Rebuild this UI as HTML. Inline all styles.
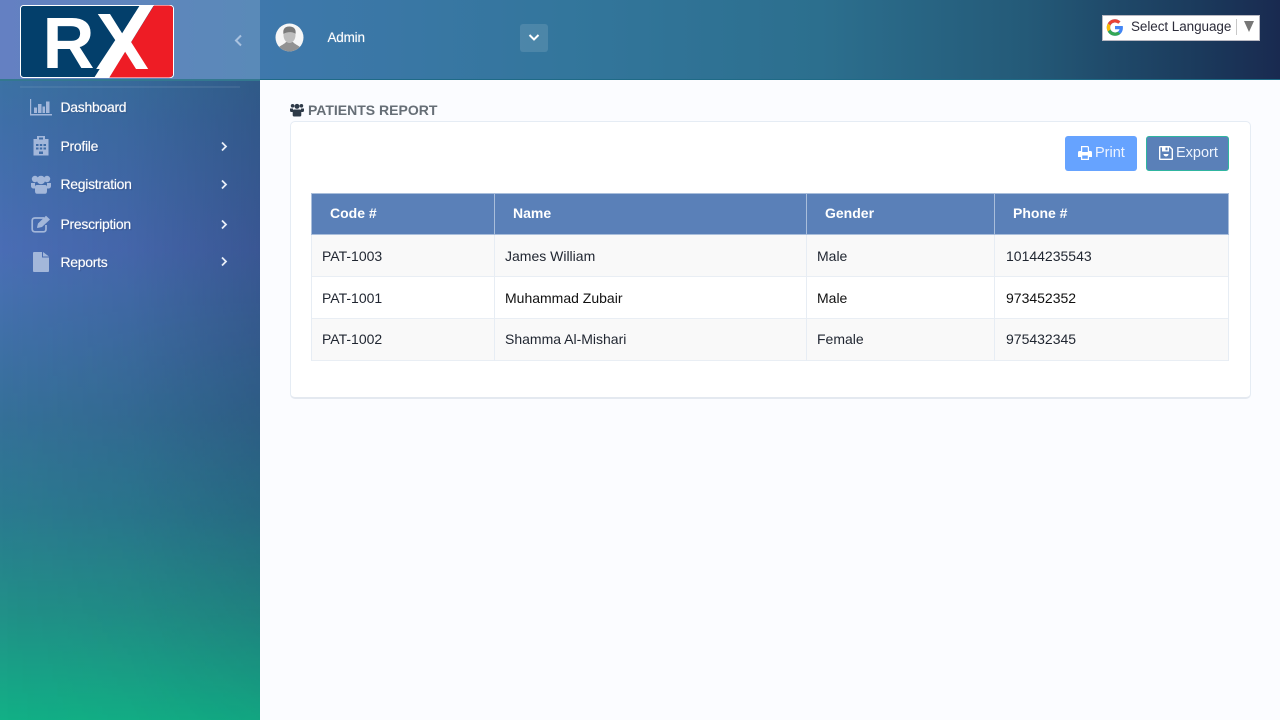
<!DOCTYPE html>
<html><head><meta charset="utf-8"><title>Patients Report</title>
<style>
*{box-sizing:border-box}
html,body{margin:0;padding:0;width:1280px;height:720px;overflow:hidden;background:#fbfcff;font-family:"Liberation Sans",sans-serif;font-size:14px;color:#212529}
.a{position:absolute}
#side{left:0;top:0;width:260px;height:720px;background:linear-gradient(180deg,#3c72a4 80px,#3f6fa8 120px,#4a6db5 250px,#4670b0 290px,#357098 420px,#2b7a90 513px,#219088 613px,#12b086 720px)}
#sideoverlay{left:0;top:0;width:260px;height:720px;background:linear-gradient(90deg,rgba(20,35,70,0) 0,rgba(20,35,70,.1) 50%,rgba(20,35,70,.3) 100%);-webkit-mask-image:linear-gradient(180deg,#000 0,#000 300px,rgba(0,0,0,.25) 720px);mask-image:linear-gradient(180deg,#000 0,#000 300px,rgba(0,0,0,.25) 720px)}
#brand{left:0;top:0;width:260px;height:80px;background:linear-gradient(90deg,#6480c2,#5a8ab8)}
#bar{left:260px;top:0;width:1020px;height:80px;background:linear-gradient(90deg,#3f78ac 0,#33769c 30%,#2c6f8e 55%,#245a78 75%,#1b3a5c 92%,#192a50 100%);border-bottom:1px solid #1f6a86}
#line{left:20px;top:86px;width:220px;height:2px;background:rgba(255,255,255,.07)}
.m{left:60.500px;color:#fff;font-size:14px;letter-spacing:-.3px;line-height:18px;text-shadow:0 0 1px rgba(255,255,255,.6),1px 1px 1px rgba(20,40,90,.35);white-space:nowrap}
.ic{fill:#a3b7da}
#card{left:290px;top:121px;width:961px;height:278px;background:#fff;border:1px solid #e5ecf4;border-bottom:2px solid #e4e9f0;border-radius:5px}
#title{left:308px;top:102px;font-weight:bold;font-size:14px;color:#666e76;line-height:17px;white-space:nowrap}
.btn{top:136px;height:35px;border-radius:3px;color:#fff;font-size:14.500px;line-height:35px;white-space:nowrap}
.h{top:193px;height:42px;background:#5a80b8;border:1px solid #a9bedb;border-width:1px 0 1px 0}
.cell{color:#1f2530;font-size:14px;line-height:18px;white-space:nowrap}
.hd{color:#fff;font-weight:bold;font-size:14px;line-height:18px;top:204px;white-space:nowrap}
.r{left:311px;width:918px}
.v{top:193px;width:1px;height:168px;background:#e7edf4}
.vh{top:193px;width:1px;height:42px;background:#a9bedb}
</style></head><body>
<div class="a" id="side"></div><div class="a" id="sideoverlay"></div>
<div class="a" id="brand"></div>
<div class="a" id="bar"></div>
<div class="a" style="left:0;top:79px;width:260px;height:2px;background:#33788f"></div>
<div class="a" id="line"></div>

<svg class="a" style="left:20px;top:5px" width="154" height="73" viewBox="0 0 154 73">
<rect x=".5" y=".5" width="153" height="72" rx="3" fill="#033f6b" stroke="#fff" stroke-width="1"/>
<path d="M134 .5H149a4 4 0 0 1 4 4V68.500a4 4 0 0 1-4 4H89z" fill="#ee1c25"/>
<text x="22.500" y="63" font-family="Liberation Sans" font-weight="bold" font-size="72" fill="#fff">R</text>
<text x="75.500" y="64" font-family="Liberation Sans" font-weight="bold" font-size="80" fill="#fff">X</text>
<path d="M120 0H134L89 73H74z" fill="#fff"/>
</svg>
<svg class="a" style="left:233px;top:34px" width="11" height="13" viewBox="0 0 11 13"><path d="M8 1.500L3 6.500L8 11.500" fill="none" stroke="#a9c2df" stroke-width="2"/></svg>

<svg class="a" style="left:275px;top:23px" width="29" height="29" viewBox="0 0 29 29">
<defs><clipPath id="av"><circle cx="14.500" cy="14.500" r="14"/></clipPath></defs>
<circle cx="14.500" cy="14.500" r="14" fill="#f6f6f6"/>
<g clip-path="url(#av)"><path d="M1 29C2 23 9 22 11 19H18C20 22 27 23 28 29z" fill="#929292"/><ellipse cx="14.500" cy="12" rx="6" ry="8" fill="#bdbdbd"/><path d="M8.500 11C7.500 5 11 3.500 14.500 3.500C18.500 3.500 21.500 6 20.500 11C18.500 8.500 11.500 8.500 8.500 11z" fill="#7a7a7a"/></g>
</svg>
<div class="a" style="left:327.500px;top:29px;color:#fff;font-size:13.500px;line-height:18px;letter-spacing:-.2px;text-shadow:0 0 1px rgba(255,255,255,.5)">Admin</div>
<div class="a" style="left:520px;top:24px;width:28px;height:28px;border-radius:3px;background:rgba(255,255,255,.12)"></div>
<svg class="a" style="left:528px;top:33px" width="12" height="9" viewBox="0 0 12 9"><path d="M1.500 2L6 6.500L10.500 2" fill="none" stroke="#fff" stroke-width="2"/></svg>

<div class="a" style="left:1102px;top:15px;width:158px;height:26px;background:#fff;border:1px solid #b9b9c2"></div>
<svg class="a" style="left:1106px;top:18px" width="18" height="19" viewBox="0 0 48 48">
<path d="M24 20v8.500h12c-.600 3-3.900 8.700-12 8.700-7.200 0-13-6-13-13.200s5.800-13.200 13-13.200c4.100 0 6.800 1.700 8.400 3.200l6.200-6C34.600 4.300 29.800 2 24 2 11.800 2 2 11.800 2 24s9.800 22 22 22c12.700 0 21.100-8.900 21.100-21.500 0-1.500-.100-2.500-.400-4.500z" fill="#4285f4"/>
<path d="M5 13l7 5.500C14 13.500 18.700 10.800 24 10.800c4.100 0 6.800 1.700 8.400 3.200l6.200-6C34.600 4.300 29.800 2 24 2 15.500 2 8.600 6.700 5 13z" fill="#ea4335"/>
<path d="M5 13C3 17 2 20 2 24s1 7.500 3 11l7.300-5.600C11.400 27.500 11 26 11 24s.400-3.800 1-5.500z" fill="#fbbc05"/>
<path d="M24 46c5.800 0 10.800-1.900 14.400-5.300l-6.900-5.400c-1.900 1.300-4.400 2-7.500 2-5.500 0-10-3.300-11.700-7.900L5 35c3.600 6.700 10.600 11 19 11z" fill="#34a853"/>
</svg>
<div class="a" style="left:1131px;top:18px;font-size:13.500px;line-height:18px;color:#2c2c3a;white-space:nowrap;letter-spacing:-.07px">Select Language</div>
<div class="a" style="left:1236px;top:19px;width:1px;height:16px;background:#c8c8c8"></div>
<svg class="a" style="left:1243px;top:21px" width="12" height="11" viewBox="0 0 12 11"><path d="M1 0H11L6 11z" fill="#777"/></svg>

<!-- sidebar menu -->
<svg class="a" style="left:30px;top:99px" width="22" height="17" viewBox="0 0 22 17"><path class="ic" d="M0 0H1.200V15H22V16.500H0zM4 8.500H7V14H4zM8 5H11.500V14H8zM12.500 7.500H15V14H12.500zM16 2.500H19.500V14H16z"/></svg>
<div class="a m" style="top:98px">Dashboard</div>
<svg class="a" style="left:33px;top:136px" width="16" height="20" viewBox="0 0 16 20"><path class="ic" fill-rule="evenodd" d="M4 0H12V3H15.500V19.500H.5V3H4zM6 1.500V3.500H10V1.500zM3 8V10H5.500V8zM6.800 8V10H9.200V8zM10.500 8V10H13V8zM3 11.500V13.500H5.500V11.500zM6.800 11.500V13.500H9.200V11.500zM10.500 11.500V13.500H13V11.500zM6 15.500V18H10V15.500z"/></svg>
<div class="a m" style="top:137px">Profile</div>
<svg class="a" style="left:31px;top:175px" width="20" height="19" viewBox="0 0 20 19"><g class="ic"><circle cx="4" cy="4" r="3.200"/><circle cx="16" cy="4" r="3.200"/><circle cx="10" cy="5" r="4.200"/><path d="M0 8H4V13.500H2Q0 13 0 11zM16 8H20V11Q20 13 18 13.500H16z"/><path d="M6 10H14Q16 10 16 12V16Q16 18.800 14 18.800H6Q4 18.800 4 16V12Q4 10 6 10z"/></g></svg>
<div class="a m" style="top:175px">Registration</div>
<svg class="a" style="left:31px;top:215px" width="20" height="18" viewBox="0 0 20 18"><path d="M13 3H4Q1.200 3 1.200 5.500V14Q1.200 16.800 4 16.800H12.500Q15 16.800 15 14V10" fill="none" stroke="#a3b7da" stroke-width="1.700"/><path class="ic" d="M6 12.500L7 8.500L15 .8L19 4.500L11 12L6.500 13z"/></svg>
<div class="a m" style="top:215px">Prescription</div>
<svg class="a" style="left:33px;top:252px" width="16" height="20" viewBox="0 0 16 20"><path class="ic" d="M0 1Q0 0 1 0H9V5.500H16V19Q16 20 15 20H1Q0 20 0 19zM10 0L16 4.500H10z"/></svg>
<div class="a m" style="top:252.500px">Reports</div>
<svg class="a" style="left:220px;top:141px" width="8" height="11" viewBox="0 0 8 11"><path d="M2 1.500L6 5.500L2 9.500" fill="none" stroke="#e8eef8" stroke-width="1.800"/></svg>
<svg class="a" style="left:220px;top:179px" width="8" height="11" viewBox="0 0 8 11"><path d="M2 1.500L6 5.500L2 9.500" fill="none" stroke="#e8eef8" stroke-width="1.800"/></svg>
<svg class="a" style="left:220px;top:219px" width="8" height="11" viewBox="0 0 8 11"><path d="M2 1.500L6 5.500L2 9.500" fill="none" stroke="#e8eef8" stroke-width="1.800"/></svg>
<svg class="a" style="left:220px;top:256px" width="8" height="11" viewBox="0 0 8 11"><path d="M2 1.500L6 5.500L2 9.500" fill="none" stroke="#e8eef8" stroke-width="1.800"/></svg>

<!-- content -->
<svg class="a" style="left:290px;top:103px" width="14" height="14" viewBox="0 0 14 14"><g fill="#2e3a48"><circle cx="2.600" cy="2.800" r="1.800"/><circle cx="11.400" cy="2.800" r="1.800"/><circle cx="7" cy="3.400" r="2.500"/><path d="M0 5.500H3V9H.8Q0 8.500 0 7.500zM11 5.500H14V7.500Q14 8.500 13.200 9H11z"/><path d="M4 6.500H10Q11.300 6.500 11.300 8V12Q11.300 13.500 10 13.500H4Q2.700 13.500 2.700 12V8Q2.700 6.500 4 6.500z"/></g></svg>
<div class="a" id="title">PATIENTS REPORT</div>
<div class="a" id="card"></div>
<div class="a btn" style="left:1065px;width:72px;background:#66a3ff"></div>
<svg class="a" style="left:1078px;top:146px" width="14" height="14" viewBox="0 0 14 14"><path fill="#fff" fill-rule="evenodd" d="M3 0H10L11 1V5H12.500Q14 5 14 6.500V11H11V14H3V11H0V6.500Q0 5 1.500 5H3zM4.200 1.200V6H9.800V1.200zM4.200 9.500V12.800H9.800V9.500z"/></svg>
<div class="a btn" style="left:1095px;width:32px;color:#eef4ff">Print</div>
<div class="a btn" style="left:1146px;width:83px;background:#5a80b8;border:1px solid #2fb5a0;line-height:33px"></div>
<svg class="a" style="left:1159px;top:146px" width="14" height="14" viewBox="0 0 14 14"><path fill="#fff" fill-rule="evenodd" d="M1 0H11L14 3V13Q14 14 13 14H1Q0 14 0 13V1Q0 0 1 0zM1.400 1.400V12.600H12.600V3.600L10.400 1.400H10V5.500H3V1.400zM6.500 1.600V4.200H8.500V1.600zM4.500 8H9.500A2.500 2.500 0 0 1 4.500 8z"/></svg>
<div class="a btn" style="left:1176px;width:42px;color:#eef4ff">Export</div>

<div class="a h" style="left:311px;width:918px"></div>
<div class="a r" style="top:235px;height:42px;background:#f9f9f9;border-bottom:1px solid #e9eef4"></div>
<div class="a r" style="top:277px;height:41px;background:#fff"></div>
<div class="a r" style="top:318px;height:43px;background:#f9f9f9;border-top:1px solid #e9eef4;border-bottom:1px solid #e9eef4"></div>
<div class="a v" style="left:311px"></div><div class="a v" style="left:494px"></div><div class="a v" style="left:806px"></div><div class="a v" style="left:994px"></div><div class="a v" style="left:1228px"></div>
<div class="a vh" style="left:311px"></div><div class="a vh" style="left:494px"></div><div class="a vh" style="left:806px"></div><div class="a vh" style="left:994px"></div><div class="a vh" style="left:1228px"></div>

<div class="a hd" style="left:330px">Code #</div><div class="a hd" style="left:513px">Name</div><div class="a hd" style="left:825px">Gender</div><div class="a hd" style="left:1013px">Phone #</div>
<div class="a cell" style="left:322px;top:247px">PAT-1003</div><div class="a cell" style="left:505px;top:247px">James William</div><div class="a cell" style="left:817px;top:247px">Male</div><div class="a cell" style="left:1006px;top:247px">10144235543</div>
<div class="a cell" style="left:322px;top:289px">PAT-1001</div><div class="a cell" style="left:505px;top:289px;color:#111">Muhammad Zubair</div><div class="a cell" style="left:817px;top:289px;color:#111">Male</div><div class="a cell" style="left:1006px;top:289px;color:#111">973452352</div>
<div class="a cell" style="left:322px;top:330px">PAT-1002</div><div class="a cell" style="left:505px;top:330px">Shamma Al-Mishari</div><div class="a cell" style="left:817px;top:330px">Female</div><div class="a cell" style="left:1006px;top:330px">975432345</div>
</body></html>
